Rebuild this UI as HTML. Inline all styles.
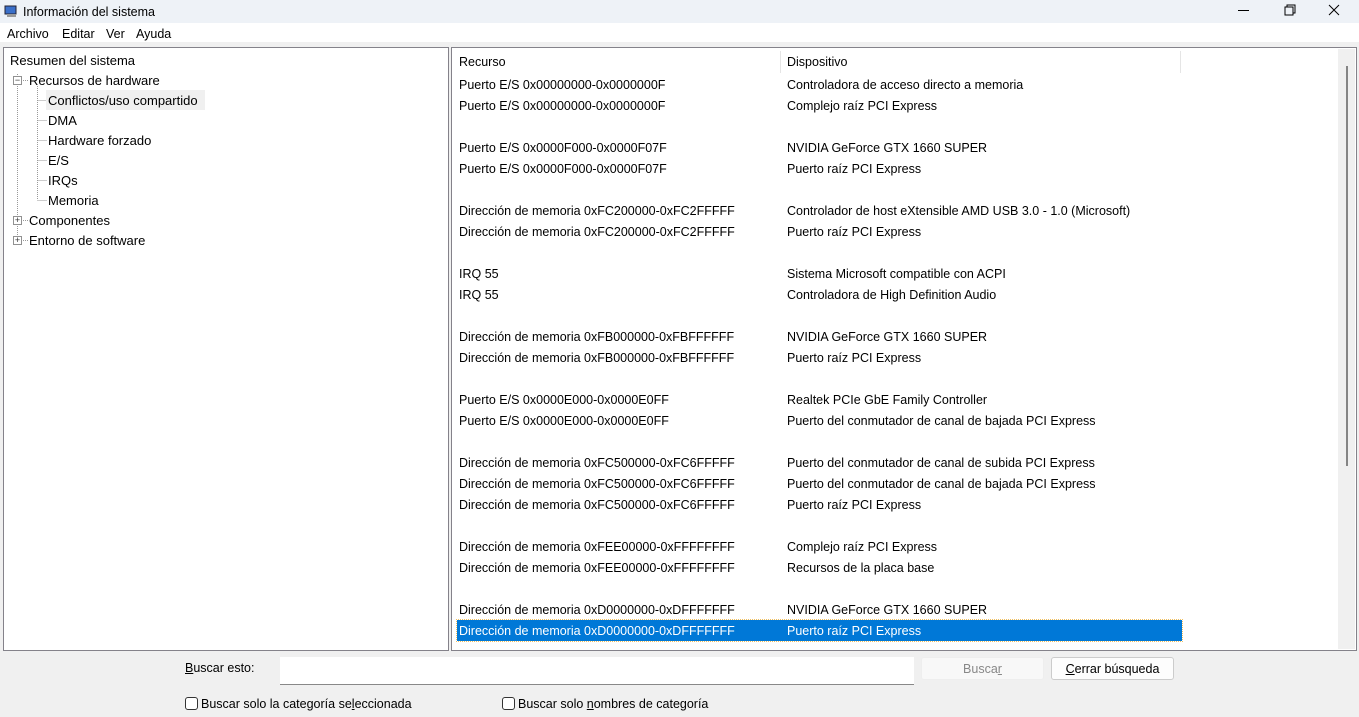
<!DOCTYPE html>
<html><head><meta charset="utf-8"><style>
*{margin:0;padding:0;box-sizing:border-box}
body{width:1359px;height:717px;background:#f0f0f0;font-family:"Liberation Sans",sans-serif;font-size:12.5px;color:#000;position:relative;overflow:hidden}
.abs{position:absolute;white-space:nowrap}
#title{left:0;top:0;width:1359px;height:23px;background:#eef2f7}
#menu{left:0;top:23px;width:1359px;height:19px;background:#fff}
#left{left:3px;top:47px;width:446px;height:604px;background:#fff;border:1px solid #84828a}
#right{left:451px;top:47px;width:906px;height:604px;background:#fff;border:1px solid #84828a}
.row{position:absolute;left:5px;width:725px;height:21px;line-height:21px}
.row span{position:absolute;top:1px}
.sel{background:#0078d7;color:#fff;outline:1px dotted #f0c060}
u{text-decoration:underline}
.cb{display:inline-block;width:13px;height:13px;border:1px solid #333;border-radius:3px;vertical-align:-2px;margin-right:3px;background:#fff}
.pm{position:absolute;width:9px;height:9px;border:1px solid #919191;background:#fff;font-size:9px;line-height:7px;text-align:center;color:#333}
.t{font-size:13px}
</style></head><body>
<div id="title" class="abs"></div>
<svg class="abs" style="left:4px;top:4px" width="14" height="14"><rect x="1" y="2" width="11" height="8" fill="#3a6fc9" stroke="#223" stroke-width="1"/><rect x="3" y="10" width="9" height="3" fill="#999"/></svg>
<div class="abs" style="left:23px;top:5px">Información del sistema</div>
<svg class="abs" style="left:1230px;top:0" width="129" height="23"><line x1="8" y1="10.5" x2="19" y2="10.5" stroke="#000"/><rect x="55" y="7" width="8" height="8" fill="none" stroke="#000"/><path d="M57 7V5h8v8h-2" fill="none" stroke="#000"/><path d="M99 5l10 10M109 5l-10 10" stroke="#000"/></svg>
<div id="menu" class="abs"></div>
<div class="abs" style="left:7px;top:27px">Archivo</div>
<div class="abs" style="left:62px;top:27px">Editar</div>
<div class="abs" style="left:106px;top:27px">Ver</div>
<div class="abs" style="left:136px;top:27px">Ayuda</div>

<div id="left" class="abs">
<svg class="abs" style="left:0;top:0" width="60" height="200"><path d="M13.5 26V196" stroke="#999" stroke-dasharray="1 1"/><path d="M33.5 38V152M33.5 52.5H43M33.5 72.5H43M33.5 92.5H43M33.5 112.5H43M33.5 132.5H43M33.5 152.5H43M19 32.5H24M19 172.5H24M19 192.5H24" stroke="#999" stroke-dasharray="1 1"/></svg>
<div class="pm" style="left:9px;top:28px">−</div>
<div class="pm" style="left:9px;top:168px">+</div>
<div class="pm" style="left:9px;top:188px">+</div>
<div class="abs t" style="left:6px;top:5px">Resumen del sistema</div>
<div class="abs t" style="left:25px;top:25px">Recursos de hardware</div>
<div class="abs" style="left:42px;top:42px;width:159px;height:20px;background:#f0f0f0"></div>
<div class="abs t" style="left:44px;top:45px">Conflictos/uso compartido</div>
<div class="abs t" style="left:44px;top:65px">DMA</div>
<div class="abs t" style="left:44px;top:85px">Hardware forzado</div>
<div class="abs t" style="left:44px;top:105px">E/S</div>
<div class="abs t" style="left:44px;top:125px">IRQs</div>
<div class="abs t" style="left:44px;top:145px">Memoria</div>
<div class="abs t" style="left:25px;top:165px">Componentes</div>
<div class="abs t" style="left:25px;top:185px">Entorno de software</div>
</div>

<div id="right" class="abs">
<div class="abs" style="left:328px;top:3px;width:1px;height:22px;background:#e5e5e5"></div>
<div class="abs" style="left:728px;top:3px;width:1px;height:22px;background:#e5e5e5"></div>
<div class="abs" style="left:7px;top:7px">Recurso</div>
<div class="abs" style="left:335px;top:7px">Dispositivo</div>
<div class="abs" style="left:886px;top:1px;width:17px;height:600px;background:#f0f0f0"></div>
<div class="abs" style="left:894px;top:18px;width:2px;height:400px;background:#858585"></div>
<div id="rows"></div>
</div>

<div class="abs" style="left:185px;top:661px"><u>B</u>uscar esto:</div>
<div class="abs" style="left:280px;top:657px;width:634px;height:28px;background:#fff;border-bottom:1px solid #888"></div>
<div class="abs" style="left:921px;top:657px;width:123px;height:23px;background:#f8f8f8;border:1px solid #eee;border-radius:3px;color:#888;text-align:center;line-height:23px">Busca<u>r</u></div>
<div class="abs" style="left:1051px;top:657px;width:123px;height:23px;background:#fdfdfd;border:1px solid #ccc;border-radius:3px;text-align:center;line-height:23px"><u>C</u>errar búsqueda</div>
<div class="abs" style="left:185px;top:697px"><span class="cb"></span>Buscar solo la categoría se<u>l</u>eccionada</div>
<div class="abs" style="left:502px;top:697px"><span class="cb"></span>Buscar solo <u>n</u>ombres de categoría</div>

<script>
var d=[
["Puerto E/S 0x00000000-0x0000000F","Controladora de acceso directo a memoria"],
["Puerto E/S 0x00000000-0x0000000F","Complejo raíz PCI Express"],null,
["Puerto E/S 0x0000F000-0x0000F07F","NVIDIA GeForce GTX 1660 SUPER"],
["Puerto E/S 0x0000F000-0x0000F07F","Puerto raíz PCI Express"],null,
["Dirección de memoria 0xFC200000-0xFC2FFFFF","Controlador de host eXtensible AMD USB 3.0 - 1.0 (Microsoft)"],
["Dirección de memoria 0xFC200000-0xFC2FFFFF","Puerto raíz PCI Express"],null,
["IRQ 55","Sistema Microsoft compatible con ACPI"],
["IRQ 55","Controladora de High Definition Audio"],null,
["Dirección de memoria 0xFB000000-0xFBFFFFFF","NVIDIA GeForce GTX 1660 SUPER"],
["Dirección de memoria 0xFB000000-0xFBFFFFFF","Puerto raíz PCI Express"],null,
["Puerto E/S 0x0000E000-0x0000E0FF","Realtek PCIe GbE Family Controller"],
["Puerto E/S 0x0000E000-0x0000E0FF","Puerto del conmutador de canal de bajada PCI Express"],null,
["Dirección de memoria 0xFC500000-0xFC6FFFFF","Puerto del conmutador de canal de subida PCI Express"],
["Dirección de memoria 0xFC500000-0xFC6FFFFF","Puerto del conmutador de canal de bajada PCI Express"],
["Dirección de memoria 0xFC500000-0xFC6FFFFF","Puerto raíz PCI Express"],null,
["Dirección de memoria 0xFEE00000-0xFFFFFFFF","Complejo raíz PCI Express"],
["Dirección de memoria 0xFEE00000-0xFFFFFFFF","Recursos de la placa base"],null,
["Dirección de memoria 0xD0000000-0xDFFFFFFF","NVIDIA GeForce GTX 1660 SUPER"],
["Dirección de memoria 0xD0000000-0xDFFFFFFF","Puerto raíz PCI Express"]];
var h="";
d.forEach(function(r,i){if(!r)return;var t=26+21*i;
h+='<div class="row'+(i==26?' sel':'')+'" style="top:'+t+'px"><span style="left:2px">'+r[0]+'</span><span style="left:330px">'+r[1]+'</span></div>';});
document.getElementById("rows").innerHTML=h;
</script>
</body></html>
